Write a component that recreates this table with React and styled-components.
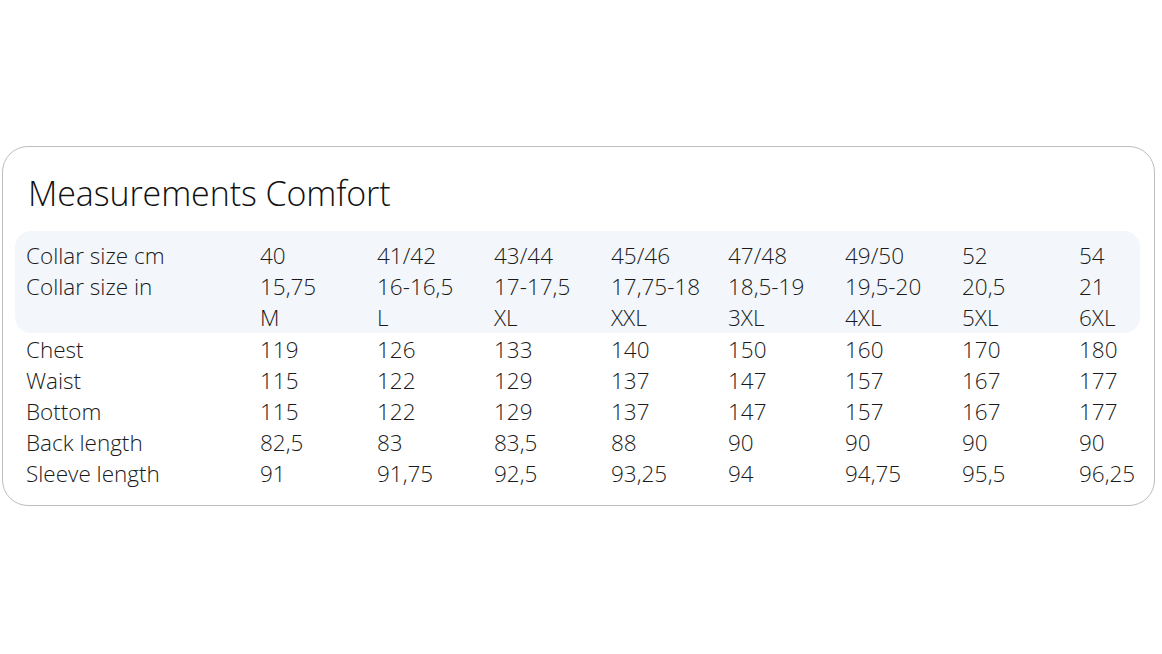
import React from "react";
import styled, { createGlobalStyle } from "styled-components";

const Global = createGlobalStyle`
  html, body { margin: 0; padding: 0; background: #fff; }
  body { font-family: "Open Sans", "Liberation Sans", sans-serif; color: #1a1a1a; }
`;

const Page = styled.div`
  width: 1162px;
  height: 654px;
  padding: 146px 0 0 2px;
  box-sizing: border-box;
`;

const Card = styled.section`
  width: 1153px;
  height: 360px;
  box-sizing: border-box;
  border: 1.5px solid #bdbdbd;
  border-radius: 26px;
  padding: 22px 14px 0 12px;
`;

const Title = styled.h1`
  margin: 0 0 14px 13px;
  font-size: 34px;
  font-weight: 300;
  line-height: 48px;
  letter-spacing: -0.1px;
  color: #111;
`;

const Band = styled.div`
  background: ${(p) => (p.$shaded ? "#f3f7fb" : "transparent")};
  border-radius: 16px;
  padding: ${(p) => (p.$shaded ? "9px 0 0" : "1px 0 0")};
`;

const Row = styled.div`
  display: grid;
  grid-template-columns: 234px repeat(7, 117px) 1fr;
  padding-left: 11px;
  height: 31px;
  align-items: center;
  font-size: 22.5px;
  font-weight: 300;
  letter-spacing: 0;
  color: #1a1a1a;
  white-space: nowrap;
`;

const Cell = styled.span``;

const head = [
  ["Collar size cm", "40", "41/42", "43/44", "45/46", "47/48", "49/50", "52", "54"],
  ["Collar size in", "15,75", "16-16,5", "17-17,5", "17,75-18", "18,5-19", "19,5-20", "20,5", "21"],
  ["", "M", "L", "XL", "XXL", "3XL", "4XL", "5XL", "6XL"],
];

const body = [
  ["Chest", "119", "126", "133", "140", "150", "160", "170", "180"],
  ["Waist", "115", "122", "129", "137", "147", "157", "167", "177"],
  ["Bottom", "115", "122", "129", "137", "147", "157", "167", "177"],
  ["Back length", "82,5", "83", "83,5", "88", "90", "90", "90", "90"],
  ["Sleeve length", "91", "91,75", "92,5", "93,25", "94", "94,75", "95,5", "96,25"],
];

const Rows = ({ data }) =>
  data.map((r, i) => (
    <Row key={i}>
      {r.map((c, j) => (
        <Cell key={j}>{c}</Cell>
      ))}
    </Row>
  ));

export default function App() {
  return (
    <>
      <Global />
      <Page>
        <Card>
          <Title>Measurements Comfort</Title>
          <Band $shaded>
            <Rows data={head} />
          </Band>
          <Band>
            <Rows data={body} />
          </Band>
        </Card>
      </Page>
    </>
  );
}
